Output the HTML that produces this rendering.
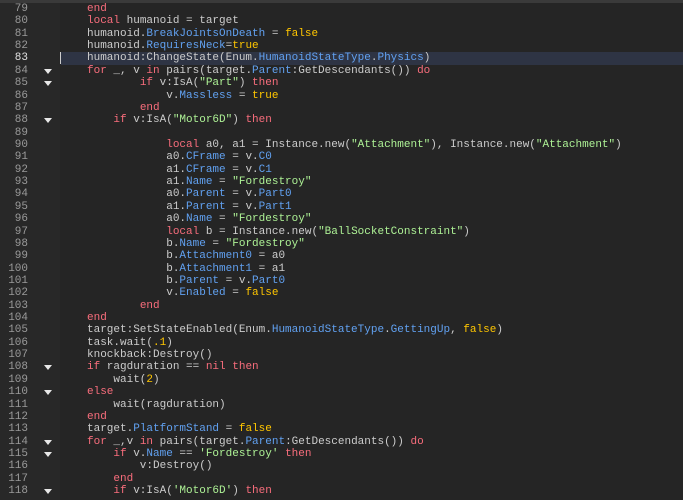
<!DOCTYPE html>
<html><head><meta charset="utf-8"><style>
html,body{margin:0;padding:0;width:683px;height:500px;overflow:hidden;background:#252525}
.tab{position:absolute;top:0;left:0;width:683px;height:3px;background:#3a3a3a}
.g{position:absolute;left:0;top:3px;width:60px;height:497px;background:#282828}
.l{position:absolute;left:0;width:683px;height:12.36px;line-height:12.36px;font-family:"Liberation Mono",monospace;font-size:11px;white-space:pre;color:#cccccc}
.n{position:absolute;left:0;width:28px;text-align:right;color:#9a9a9a}
.c{position:absolute;left:87px}
.hl{background:#2e3444}
.hl .n{color:#e0e0e0}
.k{color:#f86d7c}.p{color:#61a1f1}.s{color:#adf195}.b{color:#ffc600}
.a{position:absolute;left:44px;top:4px;width:0;height:0;border-left:4px solid transparent;border-right:4px solid transparent;border-top:5px solid #e8e8e8}
.cur{position:absolute;left:60px;top:0;width:1px;height:12px;background:#ccc}
</style></head><body>
<div class="tab"></div><div class="g"></div>
<div class="l" style="top:3px"><span class="n">79</span><span class="c"><span class="k">end</span></span></div>
<div class="l" style="top:15.4px"><span class="n">80</span><span class="c"><span class="k">local</span> humanoid = target</span></div>
<div class="l" style="top:27.7px"><span class="n">81</span><span class="c">humanoid.<span class="p">BreakJointsOnDeath</span> = <span class="b">false</span></span></div>
<div class="l" style="top:40.1px"><span class="n">82</span><span class="c">humanoid.<span class="p">RequiresNeck</span>=<span class="b">true</span></span></div>
<div class="l hl" style="top:52.4px;left:61px;width:622px"><span class="c" style="left:26px">humanoid:ChangeState(Enum.<span class="p">HumanoidStateType</span>.<span class="p">Physics</span>)</span></div>
<div class="l" style="top:52.4px;width:60px"><span class="n" style="color:#e0e0e0">83</span><span class="cur"></span></div>
<div class="l" style="top:64.8px"><span class="n">84</span><span class="a"></span><span class="c"><span class="k">for</span> _, v <span class="k">in</span> pairs(target.<span class="p">Parent</span>:GetDescendants()) <span class="k">do</span></span></div>
<div class="l" style="top:77.2px"><span class="n">85</span><span class="a"></span><span class="c">        <span class="k">if</span> v:IsA(<span class="s">"Part"</span>) <span class="k">then</span></span></div>
<div class="l" style="top:89.5px"><span class="n">86</span><span class="c">            v.<span class="p">Massless</span> = <span class="b">true</span></span></div>
<div class="l" style="top:101.9px"><span class="n">87</span><span class="c">        <span class="k">end</span></span></div>
<div class="l" style="top:114.2px"><span class="n">88</span><span class="a"></span><span class="c">    <span class="k">if</span> v:IsA(<span class="s">"Motor6D"</span>) <span class="k">then</span></span></div>
<div class="l" style="top:126.6px"><span class="n">89</span></div>
<div class="l" style="top:139px"><span class="n">90</span><span class="c">            <span class="k">local</span> a0, a1 = Instance.new(<span class="s">"Attachment"</span>), Instance.new(<span class="s">"Attachment"</span>)</span></div>
<div class="l" style="top:151.3px"><span class="n">91</span><span class="c">            a0.<span class="p">CFrame</span> = v.<span class="p">C0</span></span></div>
<div class="l" style="top:163.7px"><span class="n">92</span><span class="c">            a1.<span class="p">CFrame</span> = v.<span class="p">C1</span></span></div>
<div class="l" style="top:176px"><span class="n">93</span><span class="c">            a1.<span class="p">Name</span> = <span class="s">"Fordestroy"</span></span></div>
<div class="l" style="top:188.4px"><span class="n">94</span><span class="c">            a0.<span class="p">Parent</span> = v.<span class="p">Part0</span></span></div>
<div class="l" style="top:200.8px"><span class="n">95</span><span class="c">            a1.<span class="p">Parent</span> = v.<span class="p">Part1</span></span></div>
<div class="l" style="top:213.1px"><span class="n">96</span><span class="c">            a0.<span class="p">Name</span> = <span class="s">"Fordestroy"</span></span></div>
<div class="l" style="top:225.5px"><span class="n">97</span><span class="c">            <span class="k">local</span> b = Instance.new(<span class="s">"BallSocketConstraint"</span>)</span></div>
<div class="l" style="top:237.8px"><span class="n">98</span><span class="c">            b.<span class="p">Name</span> = <span class="s">"Fordestroy"</span></span></div>
<div class="l" style="top:250.2px"><span class="n">99</span><span class="c">            b.<span class="p">Attachment0</span> = a0</span></div>
<div class="l" style="top:262.6px"><span class="n">100</span><span class="c">            b.<span class="p">Attachment1</span> = a1</span></div>
<div class="l" style="top:274.9px"><span class="n">101</span><span class="c">            b.<span class="p">Parent</span> = v.<span class="p">Part0</span></span></div>
<div class="l" style="top:287.3px"><span class="n">102</span><span class="c">            v.<span class="p">Enabled</span> = <span class="b">false</span></span></div>
<div class="l" style="top:299.6px"><span class="n">103</span><span class="c">        <span class="k">end</span></span></div>
<div class="l" style="top:312px"><span class="n">104</span><span class="c"><span class="k">end</span></span></div>
<div class="l" style="top:324.4px"><span class="n">105</span><span class="c">target:SetStateEnabled(Enum.<span class="p">HumanoidStateType</span>.<span class="p">GettingUp</span>, <span class="b">false</span>)</span></div>
<div class="l" style="top:336.7px"><span class="n">106</span><span class="c">task.wait(<span class="b">.1</span>)</span></div>
<div class="l" style="top:349.1px"><span class="n">107</span><span class="c">knockback:Destroy()</span></div>
<div class="l" style="top:361.4px"><span class="n">108</span><span class="a"></span><span class="c"><span class="k">if</span> ragduration == <span class="k">nil</span> <span class="k">then</span></span></div>
<div class="l" style="top:373.8px"><span class="n">109</span><span class="c">    wait(<span class="b">2</span>)</span></div>
<div class="l" style="top:386.2px"><span class="n">110</span><span class="a"></span><span class="c"><span class="k">else</span></span></div>
<div class="l" style="top:398.5px"><span class="n">111</span><span class="c">    wait(ragduration)</span></div>
<div class="l" style="top:410.9px"><span class="n">112</span><span class="c"><span class="k">end</span></span></div>
<div class="l" style="top:423.2px"><span class="n">113</span><span class="c">target.<span class="p">PlatformStand</span> = <span class="b">false</span></span></div>
<div class="l" style="top:435.6px"><span class="n">114</span><span class="a"></span><span class="c"><span class="k">for</span> _,v <span class="k">in</span> pairs(target.<span class="p">Parent</span>:GetDescendants()) <span class="k">do</span></span></div>
<div class="l" style="top:448px"><span class="n">115</span><span class="a"></span><span class="c">    <span class="k">if</span> v.<span class="p">Name</span> == <span class="s">'Fordestroy'</span> <span class="k">then</span></span></div>
<div class="l" style="top:460.3px"><span class="n">116</span><span class="c">        v:Destroy()</span></div>
<div class="l" style="top:472.7px"><span class="n">117</span><span class="c">    <span class="k">end</span></span></div>
<div class="l" style="top:485px"><span class="n">118</span><span class="a"></span><span class="c">    <span class="k">if</span> v:IsA(<span class="s">'Motor6D'</span>) <span class="k">then</span></span></div>
</body></html>
